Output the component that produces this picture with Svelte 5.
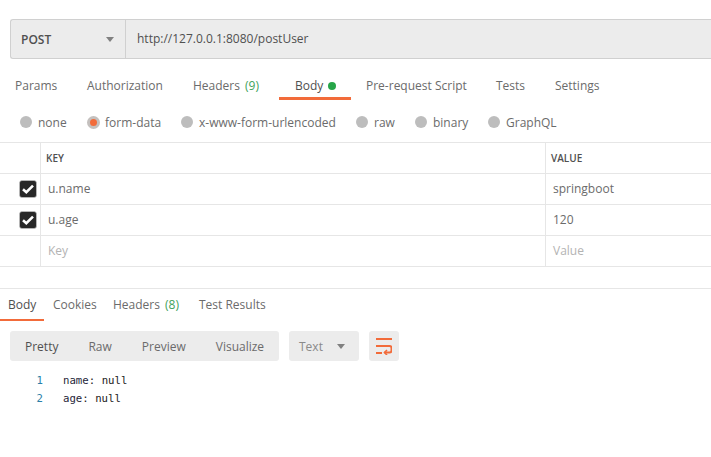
<script lang="ts">
  const requestTabs = [
    { label: "Params", width: 72 },
    { label: "Authorization", width: 106 },
    { label: "Headers", count: "(9)", width: 86 },
    { label: "Body", dot: true, active: true, width: 87 },
    { label: "Pre-request Script", width: 130 },
    { label: "Tests", width: 59 },
    { label: "Settings", width: 70 },
  ];
  const bodyTypes = [
    { label: "none", width: 67 },
    { label: "form-data", selected: true, width: 94 },
    { label: "x-www-form-urlencoded", width: 175 },
    { label: "raw", width: 59 },
    { label: "binary", width: 73 },
    { label: "GraphQL" },
  ];
  const rows = [
    { key: "u.name", value: "springboot", checked: true },
    { key: "u.age", value: "120", checked: true },
    { key: "Key", value: "Value", placeholder: true },
  ];
  const responseTabs = [
    { label: "Body", active: true, width: 44 },
    { label: "Cookies", width: 60 },
    { label: "Headers", count: "(8)", width: 86 },
    { label: "Test Results" },
  ];
  const views = ["Pretty", "Raw", "Preview", "Visualize"];
</script>

<main class="page">
  <div class="url-bar">
    <div class="method">
      <span>POST</span>
      <i class="caret"></i>
    </div>
    <div class="url">http://127.0.0.1:8080/postUser</div>
  </div>

  <nav class="tabs request-tabs">
    {#each requestTabs as tab}
      <div class={["tab", tab.active && "active"]} style:width="{tab.width}px">
        {tab.label}
        {#if tab.count}<span class="count">{tab.count}</span>{/if}
        {#if tab.dot}<i class="dot"></i>{/if}
      </div>
    {/each}
  </nav>

  <div class="body-types">
    {#each bodyTypes as type}
      <div class="radio-item" style:width={type.width ? `${type.width}px` : undefined}>
        <i class={["radio", type.selected && "selected"]}></i>
        <span>{type.label}</span>
      </div>
    {/each}
  </div>

  <div class="table">
    <div class="row head">
      <div class="check-cell"></div>
      <div class="key-cell">KEY</div>
      <div class="value-cell">VALUE</div>
    </div>
    {#each rows as row}
      <div class={["row", row.placeholder && "placeholder"]}>
        <div class="check-cell">
          {#if row.checked}
            <svg class="check" width="18" height="18" viewBox="0 0 18 18">
              <rect x="0.5" y="0.5" width="17" height="17" rx="2.5" fill="#282828" stroke="#ccc" stroke-width="0.6" />
              <path d="M4 9.3 7.3 12.2 14 5.6" fill="none" stroke="#fff" stroke-width="2.6" />
            </svg>
          {/if}
        </div>
        <div class="key-cell">{row.key}</div>
        <div class="value-cell">{row.value}</div>
      </div>
    {/each}
  </div>

  <section class="response">
    <nav class="tabs response-tabs">
      {#each responseTabs as tab}
        <div class={["tab", tab.active && "active"]} style:width={tab.width ? `${tab.width}px` : undefined}>
          {tab.label}
          {#if tab.count}<span class="count">{tab.count}</span>{/if}
        </div>
      {/each}
    </nav>

    <div class="toolbar">
      <div class="views">
        {#each views as view, i}
          <span class={i === 0 ? "current" : ""}>{view}</span>
        {/each}
      </div>
      <div class="format">
        <span>Text</span>
        <i class="caret"></i>
      </div>
      <div class="wrap">
        <svg width="16" height="17" viewBox="0 0 16 17" fill="none" stroke="#f26b3a" stroke-width="2">
          <path d="M0 1H16" />
          <path d="M0 8H13.5A2 2 0 0 1 15.5 10V12.5A2 2 0 0 1 13.5 14.5H8.5" />
          <path d="M0 15H6" />
          <path d="M11 12 8.5 14.5 11 17" stroke-width="1.6" />
        </svg>
      </div>
    </div>

    <div class="code">
      <div class="line"><span class="num">1</span><span class="name">name</span>: <span class="null">null</span></div>
      <div class="line"><span class="num">2</span><span class="name">age</span>: <span class="null">null</span></div>
    </div>
  </section>
</main>

<style>
  :global(body) {
    margin: 0;
    background: #fff;
  }

  .page {
    width: 711px;
    height: 457px;
    overflow: hidden;
    padding-top: 19px;
    box-sizing: border-box;
    font-family: "Open Sans", sans-serif;
    font-size: 12px;
    color: #505050;
  }

  .url-bar {
    display: flex;
    height: 40px;
    margin-left: 10px;
    box-sizing: border-box;
    border: 1px solid #d0d0d0;
    border-right: 0;
    border-radius: 3px 0 0 3px;
    background: #ececec;
  }

  .method {
    width: 115px;
    box-sizing: border-box;
    display: flex;
    align-items: center;
    justify-content: space-between;
    padding: 0 11px 0 10px;
    border-right: 1px solid #d0d0d0;
    font-weight: 600;
    color: #505050;
  }

  .url {
    padding-left: 11px;
    line-height: 38px;
    color: #505050;
  }

  .caret {
    display: block;
    width: 0;
    height: 0;
    border-left: 4px solid transparent;
    border-right: 4px solid transparent;
    border-top: 5px solid #808080;
  }

  .tabs {
    display: flex;
  }

  .tab {
    position: relative;
    box-sizing: border-box;
    white-space: nowrap;
    color: #6b6b6b;
  }

  .request-tabs {
    height: 42px;
    padding-top: 18px;
    box-sizing: border-box;
    margin-left: 15px;
    line-height: 18px;
  }

  .request-tabs .tab {
    height: 24px;
  }

  .request-tabs .active {
    color: #505050;
    padding-left: 16px;
  }

  .request-tabs .active::after {
    content: "";
    position: absolute;
    left: 0;
    top: 20px;
    width: 72px;
    height: 3px;
    background: #f26b3a;
  }

  .count {
    margin-left: 2px;
    color: #3fa35b;
  }

  .dot {
    display: inline-block;
    width: 8px;
    height: 8px;
    margin-left: 2px;
    border-radius: 50%;
    background: #26a548;
  }

  .body-types {
    display: flex;
    height: 41px;
    padding: 12px 0 0 20px;
    box-sizing: border-box;
  }

  .radio-item {
    display: flex;
    height: 18px;
    align-items: center;
    gap: 6px;
    color: #6b6b6b;
    white-space: nowrap;
  }

  .radio {
    width: 12px;
    height: 12px;
    border-radius: 50%;
    background: #bdbdbd;
  }

  .radio.selected {
    width: 13px;
    height: 13px;
    margin-right: -1px;
    box-sizing: border-box;
    border: 3px solid #c4c0be;
    background: #f26b3a;
  }

  .table {
    border-top: 1px solid #e6e6e6;
  }

  .row {
    display: flex;
    height: 31px;
    box-sizing: border-box;
    border-bottom: 1px solid #e6e6e6;
    line-height: 29px;
    color: #6b6b6b;
  }

  .row.head {
    height: 31px;
    font-size: 10px;
    font-weight: 600;
    color: #505050;
    line-height: 31px;
  }

  .row.placeholder {
    color: #b3b3b3;
  }

  .check-cell {
    width: 41px;
    box-sizing: border-box;
    border-right: 1px solid #e6e6e6;
    display: flex;
    align-items: center;
    padding-left: 19px;
  }

  .key-cell {
    width: 505px;
    box-sizing: border-box;
    padding-left: 7px;
    border-right: 1px solid #e6e6e6;
  }

  .value-cell {
    padding-left: 7px;
  }

  .head .key-cell,
  .head .value-cell {
    padding-left: 5px;
  }

  .response {
    margin-top: 21px;
    border-top: 1px solid #e6e6e6;
  }

  .response-tabs {
    height: 32px;
    padding-top: 7px;
    box-sizing: border-box;
    line-height: 18px;
  }

  .response-tabs .tab {
    height: 25px;
    padding-left: 8px;
  }

  .response-tabs .active {
    margin-right: 1px;
    color: #505050;
    border-bottom: 2px solid #f26b3a;
    height: 25px;
  }

  .toolbar {
    display: flex;
    margin: 10px 0 0 10px;
    height: 30px;
  }

  .views {
    display: flex;
    align-items: center;
    width: 269px;
    box-sizing: border-box;
    padding-left: 15px;
    gap: 30px;
    border-radius: 3px;
    background: #ececec;
    color: #6b6b6b;
  }

  .views .current {
    color: #505050;
  }

  .format {
    display: flex;
    align-items: center;
    justify-content: space-between;
    width: 70px;
    margin-left: 10px;
    padding: 0 14px 0 10px;
    box-sizing: border-box;
    border-radius: 3px;
    background: #ececec;
    color: #8a8a8a;
  }

  .wrap {
    display: flex;
    align-items: center;
    justify-content: center;
    width: 30px;
    margin-left: 10px;
    border-radius: 3px;
    background: #ececec;
  }

  .code {
    margin-top: 11px;
    font-family: "DejaVu Sans Mono", monospace;
    font-size: 10.7px;
    line-height: 18px;
    color: #222;
  }

  .line {
    display: flex;
    white-space: pre;
  }

  .num {
    width: 43px;
    margin-right: 20px;
    text-align: right;
    color: #2a7fa8;
  }

  .name {
    color: #1f1f3a;
  }

  .null {
    color: #222;
  }
</style>
